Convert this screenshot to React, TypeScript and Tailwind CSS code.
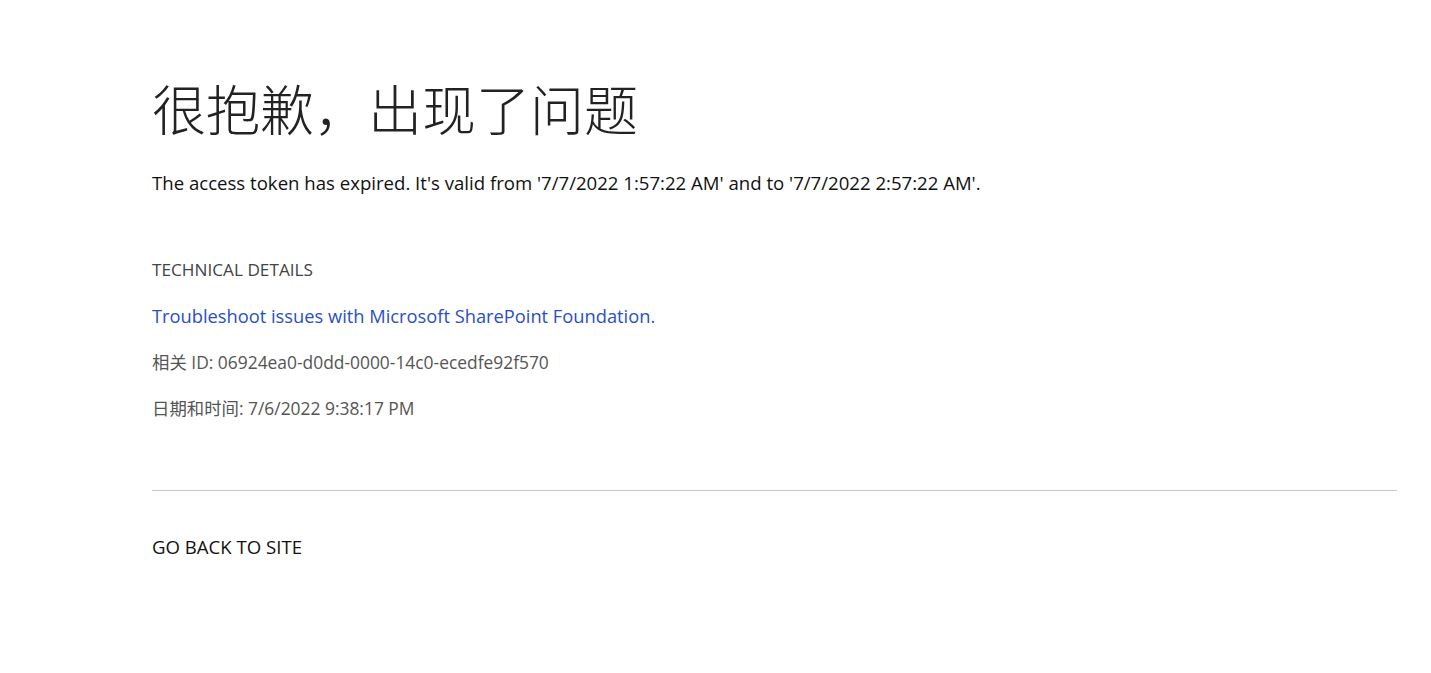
import React from 'react';

const sans = 'font-["Open_Sans","Noto_Sans_CJK_SC",sans-serif]';

export default function App() {
    return (
        <div className={`min-h-screen bg-white pl-[152px] pr-[34px] ${sans}`}>
            <div className="pt-[75px]">
                <h1 className='text-[54px] leading-[66px] font-light text-[#222] font-["Noto_Sans_CJK_SC",sans-serif]'>很抱歉，出现了问题</h1>
                <p className="mt-[30px] text-[18.6px] leading-[24px] text-[#111]">
                    The access token has expired. It's valid from '7/7/2022 1:57:22 AM' and to '7/7/2022 2:57:22 AM'.
                </p>
            </div>

            <div className="mt-[64px]">
                <h2 className="text-[17.2px] leading-[22px] text-[#444]">TECHNICAL DETAILS</h2>
                <a href="#" className="block mt-[23px] text-[18.3px] leading-[24px] text-[#2a4fc6]">
                    Troubleshoot issues with Microsoft SharePoint Foundation.
                </a>
                <p className="mt-[22px] text-[17.4px] leading-[24px] text-[#555]">相关 ID: 06924ea0-d0dd-0000-14c0-ecedfe92f570</p>
                <p className="mt-[22px] text-[17.4px] leading-[24px] text-[#555]">日期和时间: 7/6/2022 9:38:17 PM</p>
            </div>

            <div className="mt-[70px] border-t border-[#c8c8c8]" />

            <div className="pt-[44px]">
                <a href="#" className="text-[18.6px] leading-[24px] text-[#111]">GO BACK TO SITE</a>
            </div>
        </div>
    );
}
